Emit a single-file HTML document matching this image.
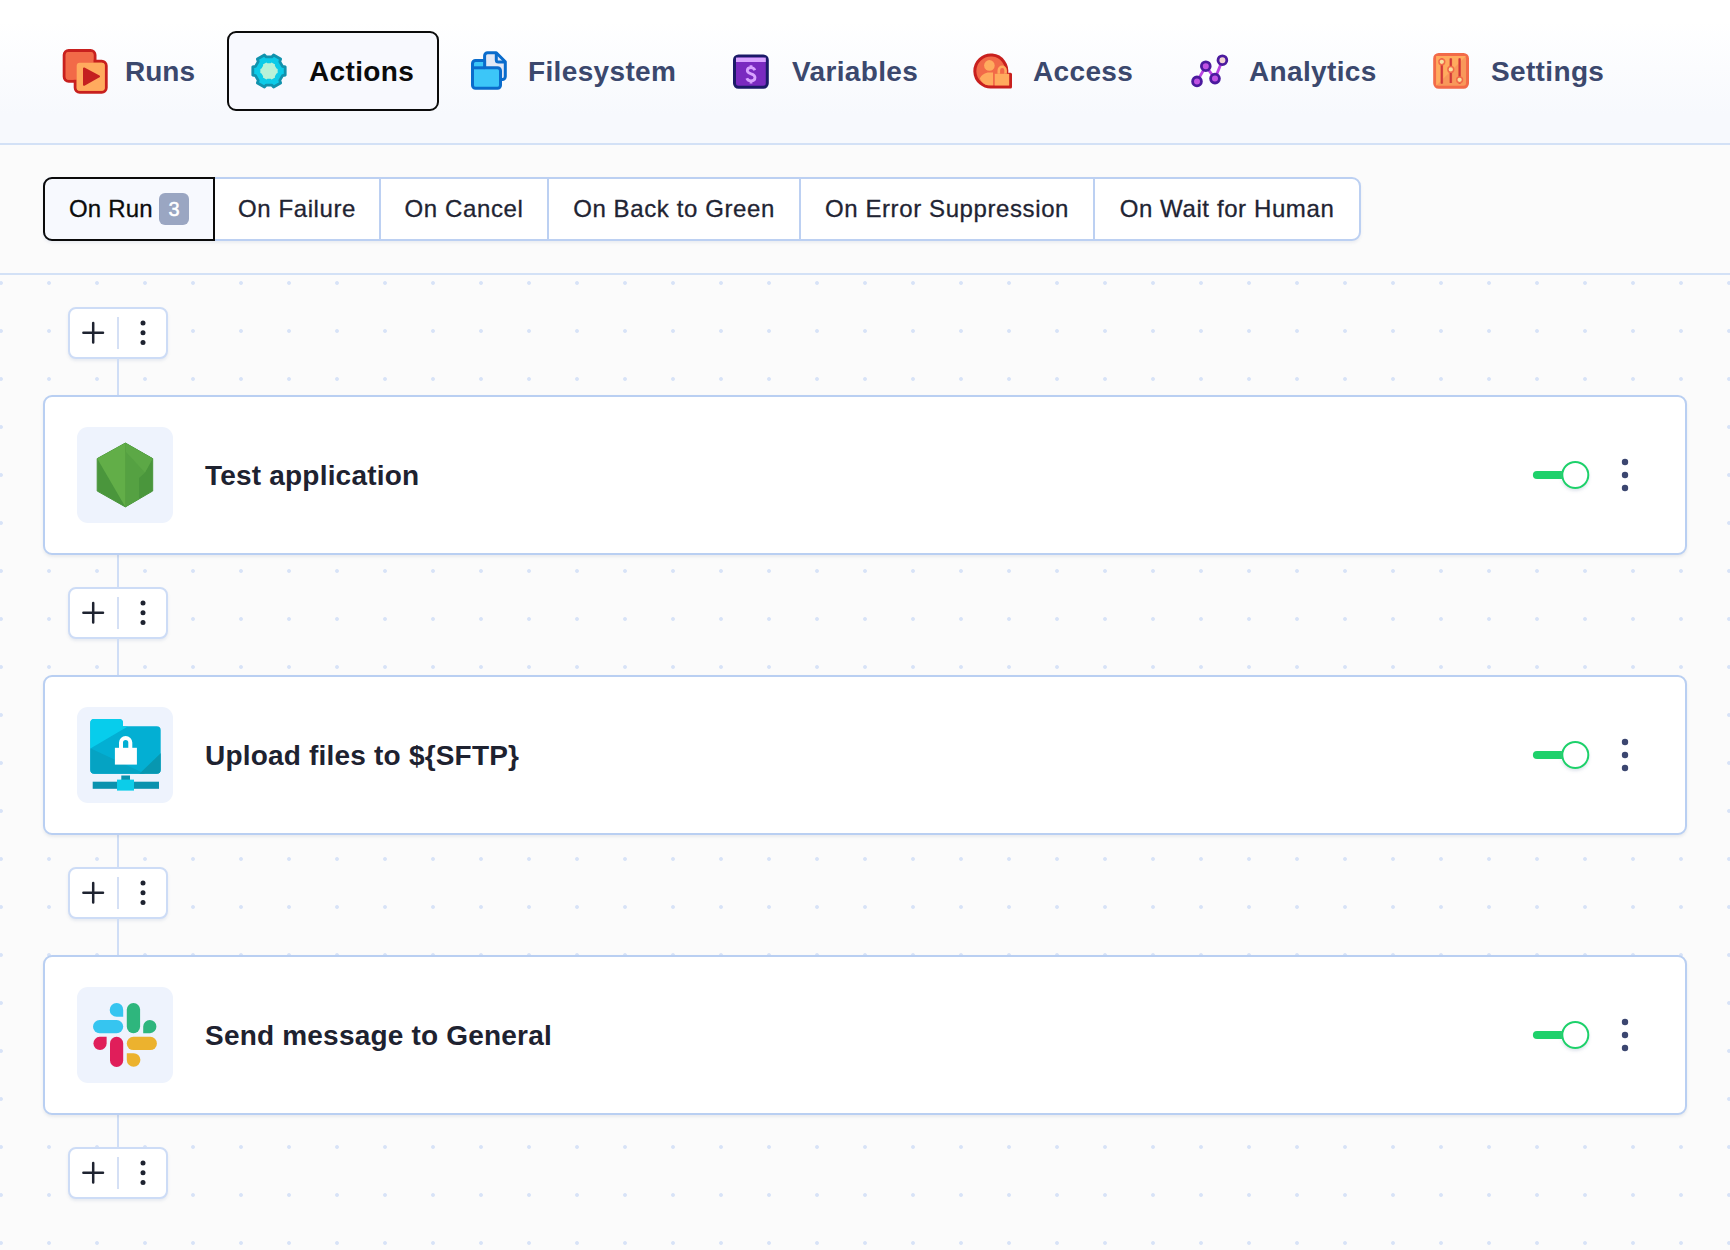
<!DOCTYPE html>
<html><head><meta charset="utf-8">
<style>
*{box-sizing:border-box;margin:0;padding:0}
html,body{width:1730px;height:1250px;overflow:hidden}
body{font-family:"Liberation Sans",sans-serif;background:#fbfbfb;position:relative;-webkit-font-smoothing:antialiased}
.abs{position:absolute}
#nav{position:absolute;left:0;top:0;width:1730px;height:145px;background:linear-gradient(#ffffff 15%,#f7f9fd 80%);border-bottom:2px solid #d3e1f6}
.nt{position:absolute;font-size:28px;font-weight:bold;color:#3b486d;line-height:28px;white-space:nowrap;letter-spacing:0.35px;margin-top:1px}
#actbox{position:absolute;left:227px;top:31px;width:212px;height:80px;border:2px solid #0b0b0b;border-radius:9px;background:#f8f9fe}
#sub{position:absolute;left:0;top:145px;width:1730px;height:130px;background:#fbfbfb;border-bottom:2px solid #d3e1f6}
#seg{position:absolute;left:43px;top:177px;height:64px;width:1318px;border:2px solid #bcd0f2;border-radius:9px;background:#fff;box-shadow:0 2px 3px rgba(120,140,180,0.12)}
.sg{position:absolute;top:0;height:60px;font-size:24px;color:#1f2433;line-height:60px;text-align:center;white-space:nowrap;letter-spacing:0.6px;-webkit-text-stroke:0.3px #1f2433}
.dv{position:absolute;top:0;width:2px;height:60px;background:#bcd0f2}
.sg.first{border-left:none}
#onrun{position:absolute;left:43px;top:177px;width:172px;height:64px;border:2px solid #0b0b0b;border-right-width:2px;border-radius:9px 0 0 9px;background:#f7f9fe}
#canvas{position:absolute;left:0;top:276px;width:1730px;height:974px;background-color:#fbfbfb;
 background-image:radial-gradient(circle at 24px 24px,#d8e3f7 0,#d8e3f7 1.5px,transparent 2.3px);background-size:48px 48px;background-position:-23px -17px}
.tb{position:absolute;left:68px;width:100px;height:52px;border:2px solid #cddcf6;border-radius:8px;background:#fff;box-shadow:0 2px 3px rgba(120,140,180,0.15)}
.conn{position:absolute;left:117px;width:2px;background:#d0def6}
.card{position:absolute;left:43px;width:1644px;height:160px;border:2px solid #b9cff2;border-radius:9px;background:#fff;box-shadow:0 2px 3px rgba(110,120,150,0.12)}
.ib{position:absolute;left:77px;width:96px;height:96px;border-radius:11px;background:#eef3fd}
.ct{position:absolute;left:205px;font-size:28px;font-weight:bold;color:#1e2230;line-height:28px;white-space:nowrap;letter-spacing:0.2px}
</style></head><body>
<div id="nav">
  <!-- Runs icon -->
  <svg class="abs" style="left:55px;top:40px" width="60" height="60" viewBox="0 0 60 60">
    <rect x="9.2" y="10.4" width="30.8" height="30.8" rx="4.5" fill="#f26a48" stroke="#c8201e" stroke-width="3"/>
    <rect x="20.2" y="21.2" width="31" height="31" rx="4.5" fill="#ffab5e" stroke="#c8201e" stroke-width="3"/>
    <rect x="10.7" y="11.9" width="27.8" height="27.8" rx="3" fill="#f26a48"/>
    <rect x="21.7" y="22.7" width="28" height="28" rx="3" fill="#ffab5e"/>
    <path d="M29 28.5L44 36.5L29 44.8Z" fill="#c42020" stroke="#c42020" stroke-width="2" stroke-linejoin="round"/>
  </svg>
  <div class="nt" style="left:125px;top:57px;letter-spacing:0">Runs</div>
  <div id="actbox"></div>
  <svg class="abs" style="left:245px;top:47px" width="48" height="48" viewBox="-24 -24 48 48">
    <path d="M13.52 -4.66L16.20 -4.04L16.20 4.04L13.52 4.66L10.79 9.38L11.60 12.01L4.60 16.05L2.73 14.04L-2.73 14.04L-4.60 16.05L-11.60 12.01L-10.79 9.38L-13.52 4.66L-16.20 4.04L-16.20 -4.04L-13.52 -4.66L-10.79 -9.38L-11.60 -12.01L-4.60 -16.05L-2.73 -14.04L2.73 -14.04L4.60 -16.05L11.60 -12.01L10.79 -9.38Z" fill="#0ccbe8" stroke="#1192ad" stroke-width="2.8" stroke-linejoin="round"/>
    <path d="M7.51 -2.44L8.67 -2.00L8.67 2.00L7.51 2.44L5.87 5.29L6.07 6.51L2.60 8.51L1.64 7.73L-1.64 7.73L-2.60 8.51L-6.07 6.51L-5.87 5.29L-7.51 2.44L-8.67 2.00L-8.67 -2.00L-7.51 -2.44L-5.87 -5.29L-6.07 -6.51L-2.60 -8.51L-1.64 -7.73L1.64 -7.73L2.60 -8.51L6.07 -6.51L5.87 -5.29Z" fill="#b8f2d8"/>
  </svg>
  <div class="nt" style="left:309px;top:57px;color:#0b0b0b">Actions</div>
  <!-- Filesystem -->
  <svg class="abs" style="left:462px;top:45px" width="50" height="50" viewBox="0 0 50 50">
    <path d="M22.6 10.7a3 3 0 0 1 3-3H34.3L43.3 16.7V31.5a3 3 0 0 1-3 3H22.6Z" fill="#e2e8f5" stroke="#0a6ccc" stroke-width="3" stroke-linejoin="round"/>
    <path d="M34.3 8V15a2 2 0 0 0 2 2H43" fill="none" stroke="#0a6ccc" stroke-width="3" stroke-linejoin="round"/>
    <path d="M10.5 18.5a3 3 0 0 1 3-3H22.6V22.8H35.5a3 3 0 0 1 3 3V40.3a3 3 0 0 1-3 3H13.5a3 3 0 0 1-3-3Z" fill="#3cc6f8" stroke="#0a6ccc" stroke-width="3" stroke-linejoin="round"/>
    <path d="M10.5 22.8H22.6" stroke="#0a6ccc" stroke-width="3"/>
  </svg>
  <div class="nt" style="left:528px;top:57px">Filesystem</div>
  <!-- Variables -->
  <svg class="abs" style="left:725px;top:45px" width="50" height="50" viewBox="0 0 50 50">
    <rect x="9.5" y="10.9" width="32.8" height="31.4" rx="4" fill="#7a2ac0" stroke="#1b1a68" stroke-width="3"/>
    <rect x="11" y="12.6" width="29.8" height="4.4" fill="#d9a3ff"/>
    <path d="M29.8 25.2C29.2 23.5 27.8 22.6 26 22.6 23.8 22.6 22.3 23.8 22.3 25.6 22.3 27.4 23.7 28.2 26 28.8 28.4 29.5 30 30.4 30 32.6 30 34.6 28.3 35.9 26 35.9 24 35.9 22.5 35 21.8 33.2M26 20.3V22.6M26 35.9V38.6" fill="none" stroke="#d9a3ff" stroke-width="2.8"/>
  </svg>
  <div class="nt" style="left:792px;top:57px">Variables</div>
  <!-- Access -->
  <svg class="abs" style="left:966px;top:45px" width="50" height="50" viewBox="0 0 50 50">
    <path d="M27 41.9H44.5V29.3H40.5A16 16 0 1 0 27 41.9Z" fill="#f26a48" stroke="#c8201e" stroke-width="3" stroke-linejoin="round"/>
    <circle cx="23.4" cy="20.4" r="5.3" fill="#ffab5e"/>
    <path d="M13.8 33.6C15.5 30 19 27.6 23.2 27.6H27V40.3H22C18.5 40.3 15.8 37.5 13.8 33.6Z" fill="#ffab5e"/>
    <path d="M32.8 28.8V25.2A3.4 3.4 0 0 1 39.6 25.2V28.8" fill="none" stroke="#ffab5e" stroke-width="2.6"/>
    <rect x="28.8" y="28.8" width="14.4" height="11.6" fill="#ffab5e"/>
  </svg>
  <div class="nt" style="left:1033px;top:57px">Access</div>
  <!-- Analytics -->
  <svg class="abs" style="left:1184px;top:45px" width="50" height="50" viewBox="0 0 50 50">
    <path d="M13 36.4L21.8 21.2L31 33.6L38.4 15.2" fill="none" stroke="#b944e2" stroke-width="2.8"/>
    <circle cx="13" cy="36.4" r="4.4" fill="#c052e2" stroke="#4b1a9e" stroke-width="2.8"/>
    <circle cx="21.8" cy="21.2" r="4.4" fill="#c052e2" stroke="#4b1a9e" stroke-width="2.8"/>
    <circle cx="31" cy="33.6" r="4.4" fill="#c052e2" stroke="#4b1a9e" stroke-width="2.8"/>
    <circle cx="38.4" cy="15.2" r="4.4" fill="#f2d2d2" stroke="#4b1a9e" stroke-width="2.8"/>
  </svg>
  <div class="nt" style="left:1249px;top:57px">Analytics</div>
  <!-- Settings -->
  <svg class="abs" style="left:1425px;top:45px" width="50" height="50" viewBox="0 0 50 50">
    <rect x="9.7" y="9.5" width="32.8" height="32.8" rx="4" fill="#f8985a" stroke="#f26a48" stroke-width="3"/>
    <path d="M11.2 11H41L11.2 40.8Z" fill="#ffab5e"/>
    <path d="M16.8 13.6V38.5M25.8 13.6V38M34.6 13.6V38.5" stroke="#e0503e" stroke-width="2.6"/><path d="M16.8 13.6V38.5M25.8 13.6V38M34.6 13.6V38.5" stroke="#b81c3a" stroke-width="1.3" stroke-dasharray="1 1"/>
    <circle cx="16.8" cy="16.8" r="2.9" fill="#f8e0a0" stroke="#f26a48" stroke-width="1.5"/>
    <circle cx="25.8" cy="24.4" r="2.9" fill="#f8e0a0" stroke="#f26a48" stroke-width="1.5"/>
    <circle cx="34.6" cy="34.8" r="2.9" fill="#f8e0a0" stroke="#f26a48" stroke-width="1.5"/>
  </svg>
  <div class="nt" style="left:1491px;top:57px">Settings</div>
</div>
<div id="sub">
</div>
<div id="seg">
  <div class="sg" style="left:170px;width:164px">On Failure</div>
  <div class="sg" style="left:336px;width:166px">On Cancel</div>
  <div class="sg" style="left:504px;width:250px">On Back to Green</div>
  <div class="sg" style="left:756px;width:292px">On Error Suppression</div>
  <div class="sg" style="left:1050px;width:264px">On Wait for Human</div>
  <div class="dv" style="left:334px"></div>
  <div class="dv" style="left:502px"></div>
  <div class="dv" style="left:754px"></div>
  <div class="dv" style="left:1048px"></div>
</div>
<div id="onrun">
  <div class="abs" style="left:24px;top:0;font-size:24px;line-height:60px;color:#0b0b0b;letter-spacing:0.2px;-webkit-text-stroke:0.3px #0b0b0b">On Run</div>
  <div class="abs" style="left:114px;top:14px;width:30px;height:32px;border-radius:6px;background:#9aa6c2;color:#fff;font-size:20px;line-height:32px;text-align:center;-webkit-text-stroke:0.5px #fff">3</div>
</div>
<div id="canvas"></div>
<div class="tb" style="top:307px">
  <svg class="abs" style="left:-2px;top:-2px" width="100" height="51" viewBox="0 0 100 51">
    <path d="M25.2 16V35.6M15.4 25.8H35" stroke="#1e2330" stroke-width="2.5" stroke-linecap="round"/>
    <path d="M50 10V42" stroke="#d5e0f5" stroke-width="2"/>
    <circle cx="75" cy="16" r="2.5" fill="#1e2330"/><circle cx="75" cy="25.8" r="2.5" fill="#1e2330"/><circle cx="75" cy="35.6" r="2.5" fill="#1e2330"/>
  </svg>
</div>
<div class="tb" style="top:587px">
  <svg class="abs" style="left:-2px;top:-2px" width="100" height="51" viewBox="0 0 100 51">
    <path d="M25.2 16V35.6M15.4 25.8H35" stroke="#1e2330" stroke-width="2.5" stroke-linecap="round"/>
    <path d="M50 10V42" stroke="#d5e0f5" stroke-width="2"/>
    <circle cx="75" cy="16" r="2.5" fill="#1e2330"/><circle cx="75" cy="25.8" r="2.5" fill="#1e2330"/><circle cx="75" cy="35.6" r="2.5" fill="#1e2330"/>
  </svg>
</div>
<div class="tb" style="top:867px">
  <svg class="abs" style="left:-2px;top:-2px" width="100" height="51" viewBox="0 0 100 51">
    <path d="M25.2 16V35.6M15.4 25.8H35" stroke="#1e2330" stroke-width="2.5" stroke-linecap="round"/>
    <path d="M50 10V42" stroke="#d5e0f5" stroke-width="2"/>
    <circle cx="75" cy="16" r="2.5" fill="#1e2330"/><circle cx="75" cy="25.8" r="2.5" fill="#1e2330"/><circle cx="75" cy="35.6" r="2.5" fill="#1e2330"/>
  </svg>
</div>
<div class="tb" style="top:1147px">
  <svg class="abs" style="left:-2px;top:-2px" width="100" height="51" viewBox="0 0 100 51">
    <path d="M25.2 16V35.6M15.4 25.8H35" stroke="#1e2330" stroke-width="2.5" stroke-linecap="round"/>
    <path d="M50 10V42" stroke="#d5e0f5" stroke-width="2"/>
    <circle cx="75" cy="16" r="2.5" fill="#1e2330"/><circle cx="75" cy="25.8" r="2.5" fill="#1e2330"/><circle cx="75" cy="35.6" r="2.5" fill="#1e2330"/>
  </svg>
</div>
<div class="conn" style="top:358px;height:38px"></div>
<div class="conn" style="top:555px;height:32px"></div>
<div class="conn" style="top:638px;height:38px"></div>
<div class="conn" style="top:835px;height:32px"></div>
<div class="conn" style="top:918px;height:38px"></div>
<div class="conn" style="top:1115px;height:32px"></div>
<div class="card" style="top:395px"></div>
<div class="ib" style="top:427px"><svg class="abs" style="left:0;top:0" width="96" height="96" viewBox="77 427 96 96">
  <path d="M125.4 443L152.7 458.6V491L125.4 506.9L97.2 491V458.6Z" fill="#4a963c" stroke="#4a963c" stroke-width="1" stroke-linejoin="round"/>
  <path d="M125.4 443L152.7 458.6L144.6 473L139 478V499L125.4 506.9Z" fill="#55a142"/>
  <path d="M125.4 443L97.2 458.6L125.4 506.9Z" fill="#62ae48"/>
  <path d="M125.4 443L152.7 458.6L145 472.5L126 452Z" fill="#5ca846"/>
</svg></div>
<div class="ct" style="top:462px">Test application</div>
<svg class="abs" style="left:1525px;top:445px" width="120" height="60" viewBox="0 0 120 60">
  <defs><filter id="sh0" x="-50%" y="-50%" width="200%" height="200%"><feDropShadow dx="0" dy="2" stdDeviation="1.5" flood-color="#8090b0" flood-opacity="0.25"/></filter></defs>
  <path d="M12 30H45" stroke="#1fd16b" stroke-width="8.2" stroke-linecap="round"/>
  <circle cx="50.3" cy="30" r="13" fill="#fff" stroke="#1fd16b" stroke-width="2" filter="url(#sh0)"/>
  <circle cx="100" cy="17" r="3.2" fill="#3b4670"/><circle cx="100" cy="30" r="3.2" fill="#3b4670"/><circle cx="100" cy="43" r="3.2" fill="#3b4670"/>
</svg>
<div class="card" style="top:675px"></div>
<div class="ib" style="top:707px"><svg class="abs" style="left:0;top:0" width="96" height="96" viewBox="0 0 96 96">
  <defs><clipPath id="fclip"><path d="M13.3 16a4 4 0 0 1 4-4H42a4 4 0 0 1 4 4V19.3H79.7a4 4 0 0 1 4 4V62.8a4 4 0 0 1-4 4H17.3a4 4 0 0 1-4-4Z"/></clipPath></defs>
  <g clip-path="url(#fclip)">
  <rect x="10" y="10" width="80" height="60" fill="#03afd3"/>
  <path d="M10 10H46V19.3H51.2L10 43.5Z" fill="#07cdec"/>
  <path d="M10 39.5L13.3 41.2L68 66.8V70H10Z" fill="#05a3c3"/>
  <path d="M90 40L83.7 46.2L62.4 66.8V70H90Z" fill="#0897b0"/>
  </g>
  <path d="M44 41.5V35.6a4.65 4.65 0 0 1 9.3 0V41.5" fill="none" stroke="#fff" stroke-width="4"/>
  <rect x="37.9" y="40.8" width="22" height="16.8" fill="#fff"/>
  <rect x="44.3" y="68.5" width="8.7" height="5" fill="#0a92ae"/>
  <rect x="15.7" y="74.7" width="66.3" height="7.1" fill="#0a92ae"/>
  <rect x="40" y="72.6" width="17" height="11" fill="#0ccde9"/>
</svg></div>
<div class="ct" style="top:742px">Upload files to ${SFTP}</div>
<svg class="abs" style="left:1525px;top:725px" width="120" height="60" viewBox="0 0 120 60">
  <defs><filter id="sh1" x="-50%" y="-50%" width="200%" height="200%"><feDropShadow dx="0" dy="2" stdDeviation="1.5" flood-color="#8090b0" flood-opacity="0.25"/></filter></defs>
  <path d="M12 30H45" stroke="#1fd16b" stroke-width="8.2" stroke-linecap="round"/>
  <circle cx="50.3" cy="30" r="13" fill="#fff" stroke="#1fd16b" stroke-width="2" filter="url(#sh1)"/>
  <circle cx="100" cy="17" r="3.2" fill="#3b4670"/><circle cx="100" cy="30" r="3.2" fill="#3b4670"/><circle cx="100" cy="43" r="3.2" fill="#3b4670"/>
</svg>
<div class="card" style="top:955px"></div>
<div class="ib" style="top:987px"><svg class="abs" style="left:0;top:0" width="96" height="96" viewBox="0 0 96 96">
  <g transform="translate(-77,-987)">
  <path d="M116.6 1003A6.6 6.6 0 0 0 116.6 1016.8H123.2V1010A6.6 6.6 0 0 0 116.6 1003Z" fill="#36c5f0"/>
  <rect x="93" y="1020" width="30.2" height="13.2" rx="6.6" fill="#36c5f0"/>
  <rect x="126.8" y="1003" width="13.3" height="30.2" rx="6.6" fill="#2eb67d"/>
  <path d="M143.2 1033.2H150.1A6.6 6.6 0 1 0 143.2 1026.6Z" fill="#2eb67d"/>
  <path d="M106.6 1036.8H99.7A6.6 6.6 0 1 0 106.6 1043.4Z" fill="#e01e5a"/>
  <rect x="110" y="1036.8" width="13.2" height="30.1" rx="6.6" fill="#e01e5a"/>
  <rect x="126.8" y="1036.8" width="30.1" height="13.3" rx="6.6" fill="#ecb22e"/>
  <path d="M126.8 1053.2H133.4A6.8 6.8 0 1 1 126.8 1060Z" fill="#ecb22e"/>
  </g>
</svg></div>
<div class="ct" style="top:1022px">Send message to General</div>
<svg class="abs" style="left:1525px;top:1005px" width="120" height="60" viewBox="0 0 120 60">
  <defs><filter id="sh2" x="-50%" y="-50%" width="200%" height="200%"><feDropShadow dx="0" dy="2" stdDeviation="1.5" flood-color="#8090b0" flood-opacity="0.25"/></filter></defs>
  <path d="M12 30H45" stroke="#1fd16b" stroke-width="8.2" stroke-linecap="round"/>
  <circle cx="50.3" cy="30" r="13" fill="#fff" stroke="#1fd16b" stroke-width="2" filter="url(#sh2)"/>
  <circle cx="100" cy="17" r="3.2" fill="#3b4670"/><circle cx="100" cy="30" r="3.2" fill="#3b4670"/><circle cx="100" cy="43" r="3.2" fill="#3b4670"/>
</svg>
</body></html>
